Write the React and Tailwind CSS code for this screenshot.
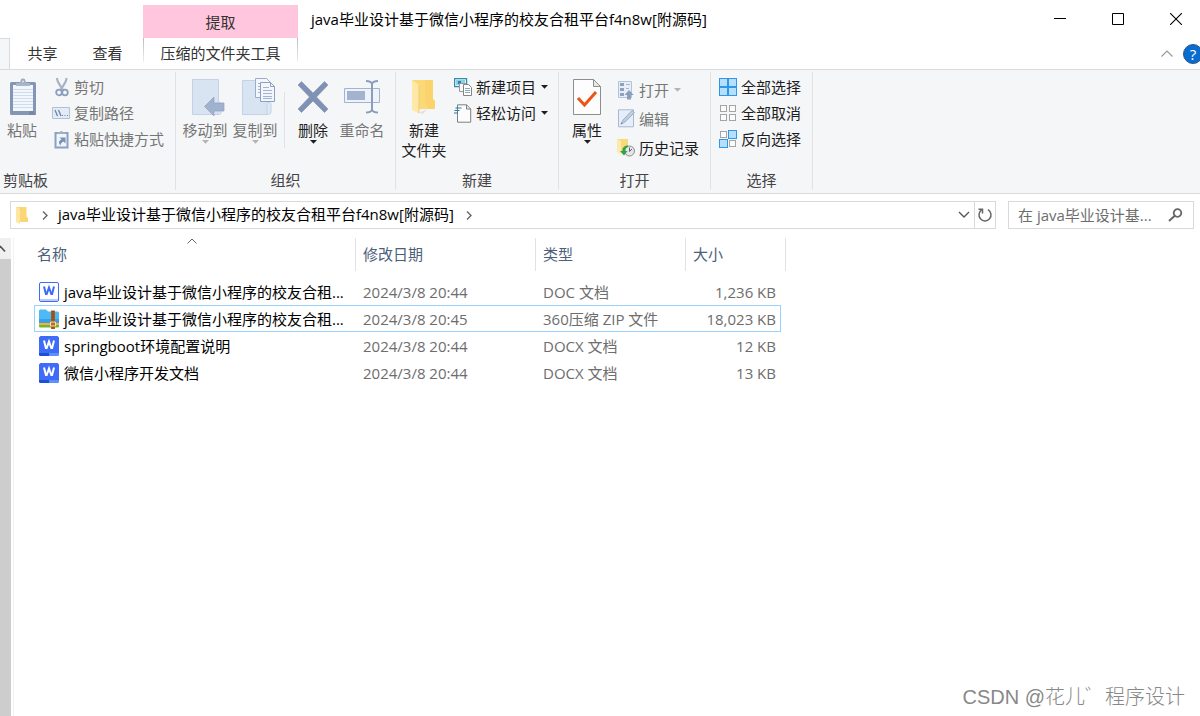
import React, { useState } from "react";

const files = [
  {
    icon: "doc",
    name: "java毕业设计基于微信小程序的校友合租...",
    date: "2024/3/8 20:44",
    type: "DOC 文档",
    size: "1,236 KB",
  },
  {
    icon: "zip",
    name: "java毕业设计基于微信小程序的校友合租...",
    date: "2024/3/8 20:45",
    type: "360压缩 ZIP 文件",
    size: "18,023 KB",
  },
  {
    icon: "docx",
    name: "springboot环境配置说明",
    date: "2024/3/8 20:44",
    type: "DOCX 文档",
    size: "12 KB",
  },
  {
    icon: "docx",
    name: "微信小程序开发文档",
    date: "2024/3/8 20:44",
    type: "DOCX 文档",
    size: "13 KB",
  },
];

/* ---------- Large ribbon icons ---------- */

const PasteIcon = () => (
  <svg width="28" height="38" viewBox="0 0 28 38">
    <rect x="2" y="4" width="26" height="33" rx="1.5" fill="#8496b6" />
    <rect x="5" y="7" width="20" height="26" fill="#f3f7fc" />
    {[11, 14, 17, 20, 23, 26, 29].map((y) => (
      <path key={y} d={`M5 ${y + 0.5}h20`} stroke="#cfdced" />
    ))}
    <path d="M21 33h4l3 4h-7z" fill="#7587aa" />
    <path d="M8 8V5h4a3 3 0 0 1 6 0h4v3z" fill="#a9b5c9" />
    <circle cx="15" cy="3" r="2.4" fill="#9ba9c1" />
    <circle cx="15" cy="3.6" r="1" fill="#e5ebf3" />
  </svg>
);

const MoveIcon = () => (
  <svg width="39" height="38" viewBox="-6 0 39 38">
    <path d="M.5 1.5h26v35H.5z" fill="#d9e4f3" stroke="#c3d2e8" />
    <path d="M26 24c2 0 3 1 3 3v8c0 1-1 1.5-3 1.5z" fill="#dfe8f5" stroke="#c3d2e8" />
    <path d="M12.5 28.500 22 19v6h10v8H22v5z" fill="#a1b2ce" stroke="#90a2c1" strokeWidth=".7" />
  </svg>
);

const CopyIcon = () => (
  <svg width="41" height="38" viewBox="-7 0 41 38">
    <path d="M.5 2.500h26v34H.5z" fill="#d9e4f3" stroke="#c3d2e8" />
    <path d="M25 36V26c0-2 4-2 4 0v8c0 2-2 2.500-4 2.500z" fill="#dfe8f5" stroke="#c3d2e8" />
    <path d="M13.500.5h11l4 4v15h-15z" fill="#f3f6fc" stroke="#9cadca" />
    <path d="M16 5.500h3M16 8.500h3M16 11.500h3M16 14.500h3" stroke="#a5b4ce" />
    <path d="M18.500 4.500h10l4 4v15h-14z" fill="#f3f6fc" stroke="#8ca0c1" />
    <path d="M28.500 4.500v4h4" fill="none" stroke="#8ca0c1" />
    <path d="M21 9.500h6M21 12.500h9M21 15.500h9M21 18.500h9M21 20.500h9" stroke="#a5b4ce" />
  </svg>
);

const DeleteIcon = () => (
  <svg width="32" height="36" viewBox="0 -2 32 36">
    <path
      d="M4.500 1.500 16 13 27.500 1.500 31 5 19.500 17 31 29l-3.500 3.500L16 21 4.500 32.500 1 29l11.500-12L1 5z"
      fill="#8092b3"
      stroke="#8092b3"
      strokeWidth=".6"
    />
  </svg>
);

const RenameIcon = () => (
  <svg width="36" height="37" viewBox="0 -1 36 37">
    <path d="M.5 9.500h35v14H.5z" fill="#eef3fb" stroke="#a2b4d0" />
    <path d="M3 12h18v9H3z" fill="#a3b3cf" />
    <path
      d="M22 2c3 0 5 .8 6 2.500C29 2.800 31 2 34 2M28 4v28M22 33.500c3 0 5-.8 6-2.500 1 1.700 3 2.500 6 2.500"
      fill="none"
      stroke="#8a9dbd"
      strokeWidth="2"
    />
  </svg>
);

const NewFolderIcon = () => (
  <svg width="26" height="37" viewBox="0 -1 26 37">
    <path d="m8 34 4 1 4-5z" fill="#cccccc" opacity=".5" />
    <path d="M1 1h21v19l2 2v8H8z" fill="#fbd978" />
    <path d="M14 1h8v19l2 2v8h-7l-3-9z" fill="#f9d067" opacity=".7" />
    <path d="m1 1 7 5v28.500L1 31z" fill="#fee9a9" />
    <path d="M8 6v28" stroke="#f2cd6b" />
  </svg>
);

const PropertiesIcon = () => (
  <svg width="30" height="38" viewBox="0 0 30 38">
    <path d="M1.500 1.500h20l7 7v28h-27z" fill="#fdfdfd" stroke="#8d8d8d" />
    <path d="M21.500 1.500v7h7z" fill="#e9e9e9" stroke="#8d8d8d" />
    <path d="m6 20 6.500 7L24 14" fill="none" stroke="#ea5415" strokeWidth="3" />
  </svg>
);

/* ---------- Small ribbon icons ---------- */

const CutIcon = () => (
  <svg width="16" height="20" viewBox="0 0 16 20">
    <path d="M4 1c0 4 3 7 6 12M13.500 1c0 4-3 7-6 12" fill="none" stroke="#a9b3c1" strokeWidth="2.200" />
    <circle cx="6" cy="15.500" r="2.800" fill="none" stroke="#8b9dbd" strokeWidth="1.800" />
    <circle cx="12" cy="15.500" r="2.800" fill="none" stroke="#8b9dbd" strokeWidth="1.800" />
  </svg>
);

const CopyPathIcon = () => (
  <svg width="18" height="12" viewBox="0 0 18 12">
    <path d="M.5.5h17v11H.5z" fill="#e3ebf7" stroke="#b2c1da" />
    <path d="m3 3 2.500 6M6.500 3 9 9" stroke="#6e83a7" strokeWidth="1.300" />
    <path d="M10 8.500h1M12.500 8.500h1M15 8.500h1" stroke="#6e83a7" />
  </svg>
);

const PasteShortcutIcon = () => (
  <svg width="16" height="20" viewBox="0 0 16 20">
    <path d="M2.500 4h12v14.500h-12z" fill="#f0f5fc" stroke="#8ca0c1" strokeWidth="2" />
    <path d="M4.500 5V3H7a1.600 1.600 0 0 1 3 0h2.500v2z" fill="#a0aec6" />
    <path d="M6.500 8.500h6v6l-2-2c-2 1-3 2-3 4-2.500-3-1.500-5 1-6z" fill="#7c90b3" />
  </svg>
);

const NewItemIcon = () => (
  <svg width="18" height="18" viewBox="0 0 18 18">
    <path d="M.6.600h12v8H.6z" fill="#e4f2f8" stroke="#318fae" strokeWidth="1.200" />
    <path d="M2 2h9v5H2z" fill="#8fd0e6" />
    <path d="M4 3h3v3H4z" fill="#2f7fa5" />
    <path d="M5.500 5.500h6v8h-6z" fill="#fafafa" stroke="#999" />
    <path d="M9.500 6.500h5l3 3v8h-8z" fill="#fff" stroke="#858585" />
    <path d="M11 10.500h5M11 12.500h5M11 14.500h5" stroke="#8ca8c0" />
  </svg>
);

const EasyAccessIcon = () => (
  <svg width="18" height="19" viewBox="0 0 18 19">
    <path d="M3.500.8h9l4.200 4.200v13.200H3.500z" fill="#fcfcfc" stroke="#7e7e7e" />
    <path d="M12.500.8V5h4.200" fill="none" stroke="#7e7e7e" />
    <path d="M1.500 4h6M.5 6.500h5M0 9h4" stroke="#2a77ad" strokeWidth="1.200" />
  </svg>
);

const OpenIcon = () => (
  <svg width="16" height="20" viewBox="0 0 16 20">
    <path d="M.5 1.500h13v16H.5z" fill="#e8eef8" stroke="#b5c2d8" />
    <path d="M2 3h4v3H2zM2 8h4v3H2zM2 13h4v3H2z" fill="#8ea1c0" />
    <path d="M8 4.500h4M8 8.500h3" stroke="#aab9d1" />
    <path d="m11 10 4.700 5H13v4.500H9V15H6.500z" fill="#8b9ebe" />
  </svg>
);

const EditIcon = () => (
  <svg width="17" height="19" viewBox="0 0 17 19">
    <path d="M.5.800h15v17H.5z" fill="#e7eef9" stroke="#a8b9d3" />
    <path d="M3 15 5 11 14 1.500l2.500 2L7 13z" fill="#c0cee3" stroke="#8fa2c1" strokeWidth=".8" />
    <path d="m2.500 15.500 2.500-1-1.500-1.300z" fill="#7389ac" />
  </svg>
);

const HistoryIcon = () => (
  <svg width="18" height="19" viewBox="0 0 18 19">
    <path d="M0 1h11v14H3z" fill="#f9d978" />
    <path d="m0 1 4 2v14l-4-3z" fill="#fdeab0" />
    <circle cx="12.500" cy="13" r="5" fill="#e3e5e6" stroke="#8d8d8d" />
    <path d="M12.500 9.500v4l2.500-2.500" fill="none" stroke="#666" />
    <path d="M11 7.500c-4 0-6 2.500-5.500 5.500H3l4 4.500 3.500-4.500H8.500c-.5-2 .5-3.500 2.500-4z" fill="#34a146" />
  </svg>
);

const squareAt = [
  [0, 0],
  [9, 0],
  [0, 9],
  [9, 9],
];

const SelectAllIcon = () => (
  <svg width="18" height="18" viewBox="0 0 18 18">
    <rect width="18" height="18" fill="#2e97ea" />
    {squareAt.map(([x, y]) => (
      <rect key={`${x}-${y}`} x={x ? 10 : 1} y={y ? 10 : 1} width="7" height="7" fill="#b5dffb" />
    ))}
  </svg>
);

const SelectNoneIcon = () => (
  <svg width="18" height="18" viewBox="0 0 18 18">
    {squareAt.map(([x, y]) => (
      <rect key={`${x}-${y}`} x={x + 1.5} y={y + 1.5} width="6" height="6" fill="#fbfbfb" stroke="#a5a5a5" />
    ))}
  </svg>
);

const InvertIcon = () => (
  <svg width="18" height="18" viewBox="0 0 18 18">
    {squareAt.map(([x, y], i) =>
      i === 1 || i === 2 ? (
        <rect key={i} x={x + 0.5} y={y + 0.5} width="8" height="8" fill="#b5dffb" stroke="#2e97ea" />
      ) : (
        <rect key={i} x={x + 1.5} y={y + 1.5} width="6" height="6" fill="#fbfbfb" stroke="#a5a5a5" />
      )
    )}
  </svg>
);

const Caret = () => (
  <svg width="7" height="4" viewBox="0 0 7 4">
    <path d="M0 0h7L3.500 3.800z" fill="currentColor" />
  </svg>
);

/* ---------- File icons ---------- */

const FileIcon = ({ kind }) => {
  if (kind === "zip") {
    return (
      <svg width="20" height="20" viewBox="0 0 20 20">
        <path d="M0 2.500C0 1 .5.500 2 .500h5l2 2h9c1.500 0 2 .5 2 2V15H0z" fill="#4db9f5" />
        <path d="M0 10h20v4H0z" fill="#37a0ea" />
        <path d="M0 14h20v2.500H0z" fill="#f7b52b" />
        <path d="M0 16h20v1c0 1-.5 1.500-1.500 1.500h-17C.5 18.500 0 18 0 17z" fill="#72b53a" />
        <path d="M12 1.500h4V20h-4z" fill="#a75d20" />
        <path d="M14 2v17" stroke="#7e4012" strokeDasharray="1.500 1" />
        <path d="M11.500 13h5v4h-5z" fill="#b8702c" stroke="#f5dfb0" />
      </svg>
    );
  }
  const outlined = kind === "doc";
  return (
    <svg width="20" height="20" viewBox="0 0 20 20">
      <rect x=".5" y=".5" width="19" height="19" rx="1.5" fill={outlined ? "#fff" : "#3e6bf7"} stroke="#3e6bf7" />
      <path d={outlined ? "M1 17h18v2H1z" : "M10 17h10v1.500q0 1.500-1.500 1.500H10z"} fill={outlined ? "#bccafa" : "#5c91fb"} />
      {!outlined && <path d="M0 17h10v3H1.500Q0 20 0 18.500z" fill="#1b4fd6" />}
      <path
        d="m5 4.500 1.900 7.500h.8L10 5.500l2.300 6.500h.8L15 4.500"
        fill="none"
        stroke={outlined ? "#3e6bf7" : "#fff"}
        strokeWidth="2"
      />
    </svg>
  );
};

/* ---------- Ribbon parts ---------- */

const Group = ({ label, labelClass = "text-center", children }) => (
  <section className="flex flex-col border-r border-[#e0e2e4]">
    <div className="flex h-[98px] items-start">{children}</div>
    <div className={`leading-5 text-[#444] ${labelClass}`}>{label}</div>
  </section>
);

const BigButton = ({ icon, label, width, disabled, caret }) => (
  <button
    type="button"
    disabled={disabled}
    className={`flex flex-col items-center pt-[6px] leading-5 whitespace-pre-line ${width} ${
      disabled ? "text-[#767676]" : "text-[#1e1e1e]"
    }`}
  >
    <span className="flex h-[42px] items-start justify-center">{icon}</span>
    <span>{label}</span>
    {caret && (
      <span className={disabled ? "text-[#b4b4b4]" : ""}>
        <Caret />
      </span>
    )}
  </button>
);

const SmallButton = ({ icon, label, height = "h-[26px]", disabled, caret }) => (
  <button
    type="button"
    disabled={disabled}
    className={`flex items-center ${height} ${disabled ? "text-[#767676]" : "text-[#1e1e1e]"}`}
  >
    <span className="flex w-[22px] justify-center pr-1">{icon}</span>
    {label}
    {caret && (
      <span className={`ml-[5px] ${disabled ? "text-[#b4b4b4]" : ""}`}>
        <Caret />
      </span>
    )}
  </button>
);

const Ribbon = () => (
  <div className="flex border-y border-[#dadbdc] bg-[#f5f6f8] pt-[2px] pb-[3px]">
    <Group label="剪贴板" labelClass="pl-[3px]">
      <BigButton icon={<PasteIcon />} label="粘贴" width="w-[44px]" disabled />
      <div className="ml-2 pt-[2px] pr-[11px]">
        <SmallButton icon={<CutIcon />} label="剪切" disabled />
        <SmallButton icon={<CopyPathIcon />} label="复制路径" disabled />
        <SmallButton icon={<PasteShortcutIcon />} label="粘贴快捷方式" disabled />
      </div>
    </Group>
    <Group label="组织">
      <div className="flex pr-2 pl-1">
        <BigButton icon={<MoveIcon />} label="移动到" width="w-[50px]" disabled caret />
        <BigButton icon={<CopyIcon />} label="复制到" width="w-[50px]" disabled caret />
        <div className="mx-1 mt-5 h-14 w-px bg-[#e0e2e4]" />
        <BigButton icon={<DeleteIcon />} label="删除" width="w-[48px]" caret />
        <BigButton icon={<RenameIcon />} label="重命名" width="w-[50px]" disabled />
      </div>
    </Group>
    <Group label="新建">
      <BigButton icon={<NewFolderIcon />} label={"新建\n文件夹"} width="w-[56px]" />
      <div className="ml-[2px] pt-[2px] pr-[10px]">
        <SmallButton icon={<NewItemIcon />} label="新建项目" caret />
        <SmallButton icon={<EasyAccessIcon />} label="轻松访问" caret />
      </div>
    </Group>
    <Group label="打开">
      <BigButton icon={<PropertiesIcon />} label="属性" width="w-[56px]" caret />
      <div className="ml-[2px] pt-[3px] pr-[11px]">
        <SmallButton icon={<OpenIcon />} label="打开" height="h-[29px]" disabled caret />
        <SmallButton icon={<EditIcon />} label="编辑" height="h-[29px]" disabled />
        <SmallButton icon={<HistoryIcon />} label="历史记录" height="h-[29px]" />
      </div>
    </Group>
    <Group label="选择">
      <div className="pt-[2px] pr-[11px] pl-2">
        <SmallButton icon={<SelectAllIcon />} label="全部选择" />
        <SmallButton icon={<SelectNoneIcon />} label="全部取消" />
        <SmallButton icon={<InvertIcon />} label="反向选择" />
      </div>
    </Group>
  </div>
);

const TitleBar = () => (
  <header className="flex h-[38px] items-stretch">
    <div className="mt-[5px] ml-[143px] flex w-[155px] items-center justify-center bg-[#ffc6de] text-[#333]">
      提取
    </div>
    <h1 className="ml-[13px] flex-1 leading-[38px] text-black">
      java毕业设计基于微信小程序的校友合租平台f4n8w[附源码]
    </h1>
    <div className="-mr-[5px] flex">
      <button type="button" aria-label="最小化" className="flex w-[58px] items-center justify-center">
        <svg width="12" height="12" viewBox="0 0 12 12">
          <path d="M0 5.500h12" stroke="#000" />
        </svg>
      </button>
      <button type="button" aria-label="最大化" className="flex w-[58px] items-center justify-center">
        <svg width="12" height="12" viewBox="0 0 12 12">
          <path d="M.5.5h11v11H.5z" fill="none" stroke="#000" />
        </svg>
      </button>
      <button type="button" aria-label="关闭" className="flex w-[58px] items-center justify-center">
        <svg width="12" height="12" viewBox="0 0 12 12">
          <path d="m0 0 12 12M12 0 0 12" stroke="#000" strokeWidth="1.100" />
        </svg>
      </button>
    </div>
  </header>
);

const Tabs = () => (
  <nav className="flex h-[31px] items-stretch text-[#333]">
    <div className="w-[10px] border-t border-r border-[#dadbdc] bg-[#f5f6f8]" />
    <button type="button" className="w-[65px] pb-[2px]">
      共享
    </button>
    <button type="button" className="w-[65px] pb-[2px]">
      查看
    </button>
    <div className="ml-[3px] flex w-[155px] justify-between">
      <div className="h-6 w-px bg-linear-to-b from-[#bbb] to-[#eee]" />
      <button type="button" className="pb-[2px]">
        压缩的文件夹工具
      </button>
      <div className="h-6 w-px bg-linear-to-b from-[#bbb] to-[#eee]" />
    </div>
    <div className="-mr-[3px] ml-auto flex items-center gap-[10px]">
      <button type="button" aria-label="折叠功能区">
        <svg width="12" height="7" viewBox="0 0 12 7">
          <path d="m.5 6.500 5.500-5.500 5.500 5.500" fill="none" stroke="#999" strokeWidth="1.200" />
        </svg>
      </button>
      <button
        type="button"
        className="h-5 w-5 rounded-full border border-[#30568a] bg-[#0a6cce] text-[15px] leading-[18px] text-white"
      >
        ?
      </button>
    </div>
  </nav>
);

const Chevron = () => (
  <svg width="6" height="9" viewBox="0 0 6 9">
    <path d="m1 .5 4 4-4 4" fill="none" stroke="#666" strokeWidth="1.400" />
  </svg>
);

const AddressBar = ({ search, setSearch }) => (
  <div className="flex h-[44px] items-start gap-3 pt-[7px] pr-[6px] pl-[10px]">
    <div className="flex h-7 min-w-0 flex-1 items-center border border-[#d9d9d9]">
      <svg width="12" height="17" viewBox="0 0 12 17" className="ml-[5px]">
        <path d="M0 0h10.500v10l1.500.5V15H4z" fill="#fbd674" />
        <path d="m0 0 4 2v15l-4-2z" fill="#fee7a3" />
      </svg>
      <span className="ml-[14px] flex">
        <Chevron />
      </span>
      <a href="#folder" className="mr-3 ml-[10px] pb-[2px] text-black">
        java毕业设计基于微信小程序的校友合租平台f4n8w[附源码]
      </a>
      <Chevron />
      <button type="button" aria-label="以前的位置" className="mr-1 ml-auto">
        <svg width="12" height="8" viewBox="0 0 12 8">
          <path d="m1 1 5 5 5-5" fill="none" stroke="#555" strokeWidth="1.400" />
        </svg>
      </button>
      <button
        type="button"
        aria-label="刷新"
        className="flex h-full w-[21px] items-center justify-center border-l border-[#d9d9d9]"
      >
        <svg width="16" height="16" viewBox="0 0 16 16">
          <path d="M5 2.700a6 6 0 1 0 6 0" fill="none" stroke="#666" strokeWidth="1.500" />
          <path d="M5.500 6.500V2.300H1.500" fill="none" stroke="#666" strokeWidth="1.500" />
        </svg>
      </button>
    </div>
    <label className="flex h-7 w-[186px] items-center border border-[#d9d9d9] pr-[10px] pl-[9px]">
      <input
        type="text"
        aria-label="搜索"
        value={search}
        onChange={(e) => setSearch(e.target.value)}
        placeholder="在 java毕业设计基..."
        className="min-w-0 flex-1 placeholder-[#6d6d6d] outline-none"
      />
      <svg width="15" height="14" viewBox="0 0 15 14">
        <circle cx="9.500" cy="5" r="3.800" fill="none" stroke="#666" strokeWidth="1.800" />
        <path d="M6.800 7.800 1 13" stroke="#666" strokeWidth="2" />
      </svg>
    </label>
  </div>
);

const FileTable = ({ selected, setSelected }) => (
  <table className="w-[752px] table-fixed border-separate border-spacing-0 text-left">
    <colgroup>
      <col className="w-[322px]" />
      <col className="w-[180px]" />
      <col className="w-[150px]" />
      <col className="w-[95px]" />
      <col className="w-[5px]" />
    </colgroup>
    <thead className="text-[#4c607a]">
      <tr className="h-[33px]">
        <th className="relative border-r border-[#e2e2e2] pb-[2px] pl-[3px] font-normal">
          名称
          <svg width="10" height="6" viewBox="0 0 10 6" className="absolute top-0 left-[153px]">
            <path d="m.5 5.500 4.500-4.500 4.500 4.500" fill="none" stroke="#666" />
          </svg>
        </th>
        <th className="border-r border-[#e2e2e2] pb-[2px] pl-[7px] font-normal">修改日期</th>
        <th className="border-r border-[#e2e2e2] pb-[2px] pl-[7px] font-normal">类型</th>
        <th className="pb-[2px] pl-[7px] font-normal">大小</th>
        <td className="border-r border-[#e2e2e2]" />
      </tr>
    </thead>
    <tbody className="text-[#6d6d6d]">
      <tr className="h-[7px]">
        <td colSpan={5} />
      </tr>
      {files.map((file, idx) => {
        const line = idx === selected ? "border-[#99d1ff]" : "border-transparent";
        return (
          <tr key={idx} className="h-[27px]" onClick={() => setSelected(idx)}>
            <td className={`border-y border-l ${line}`}>
              <div className="flex h-[25px] items-center gap-[5px] pl-1 whitespace-nowrap text-black">
                <FileIcon kind={file.icon} />
                {file.name}
              </div>
            </td>
            <td className={`border-y pl-[7px] ${line}`}>{file.date}</td>
            <td className={`border-y pl-[7px] ${line}`}>{file.type}</td>
            <td className={`border-y border-r pr-1 text-right whitespace-nowrap ${line}`}>{file.size}</td>
          </tr>
        );
      })}
    </tbody>
  </table>
);

export default function App() {
  const [search, setSearch] = useState("");
  const [selected, setSelected] = useState(1);

  return (
    <div className="relative flex min-h-screen flex-col overflow-hidden bg-white font-['Open_Sans','Noto_Sans_CJK_SC',sans-serif] text-[15px] leading-5">
      <TitleBar />
      <Tabs />
      <Ribbon />
      <AddressBar search={search} setSearch={setSearch} />
      <main className="flex flex-1">
        <div className="w-[11px] bg-[#cdcdcd]">
          <div className="h-[21px] bg-[#f0f0f0] pt-[7px]">
            <svg width="6" height="8" viewBox="0 0 6 8">
              <path d="m0 1 5 5.500" stroke="#555" strokeWidth="1.800" />
            </svg>
          </div>
        </div>
        <div className="ml-[2px] border-l border-[#f2f2f2] pl-5">
          <FileTable selected={selected} setSelected={setSelected} />
        </div>
      </main>
      <div className="absolute right-[15px] bottom-[7px] font-['Liberation_Sans','Noto_Sans_CJK_SC',sans-serif] text-[20px] leading-6 font-light text-[#888]">
        CSDN @花儿゛程序设计
      </div>
    </div>
  );
}
